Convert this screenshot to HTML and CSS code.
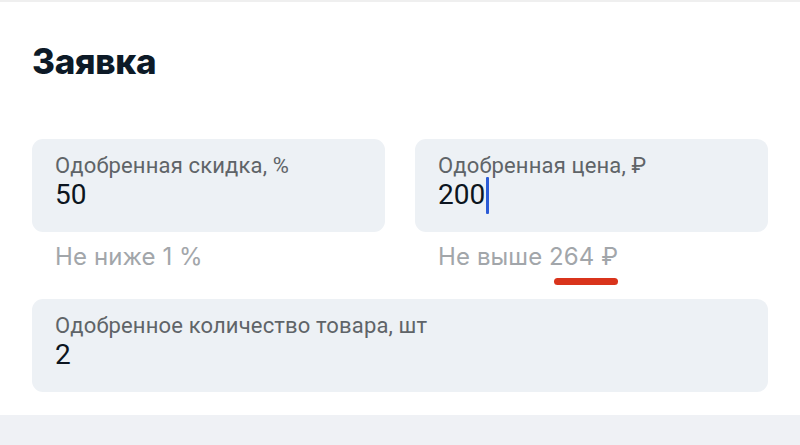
FILE: index.html
```html
<!DOCTYPE html>
<html lang="ru">
<head>
<meta charset="utf-8">
<title>Заявка</title>
<link rel="stylesheet" href="styles.css">
</head>
<body>
<div class="page">
  <div class="topline"></div>
  <div class="content">
    <h1 class="title">Заявка</h1>
    <div class="grid">
      <div class="col">
        <div class="field">
          <div class="label">Одобренная скидка, %</div>
          <div class="value">50</div>
        </div>
        <div class="hint">Не ниже 1 %</div>
      </div>
      <div class="col">
        <div class="field">
          <div class="label">Одобренная цена, ₽</div>
          <div class="value">200<span class="cursor"></span></div>
        </div>
        <div class="hint">Не выше <span class="mark">264 ₽</span></div>
      </div>
    </div>
    <div class="field field-wide">
      <div class="label">Одобренное количество товара, шт</div>
      <div class="value">2</div>
    </div>
  </div>
  <div class="band"></div>
</div>
</body>
</html>
```

FILE: styles.css
```css
html, body {
  margin: 0;
  padding: 0;
  background: #ffffff;
}
.page {
  width: 800px;
  height: 445px;
  overflow: hidden;
  display: flex;
  flex-direction: column;
}
.topline {
  height: 2px;
  background: #efefef;
}
.content {
  padding: 38px 32px 0;
}
.title {
  margin: 0;
  font-family: Inter, "Open Sans", sans-serif;
  font-weight: 800;
  font-size: 35px;
  line-height: 42px;
  color: #0d1a27;
  letter-spacing: -0.3px;
}
.grid {
  margin-top: 57px;
  display: grid;
  grid-template-columns: 1fr 1fr;
  column-gap: 30px;
}
.field {
  background: #edf1f5;
  border-radius: 11px;
  padding: 14px 23px 21px;
}
.label {
  font-family: Roboto, "Noto Sans", sans-serif;
  font-size: 22px;
  line-height: 26px;
  color: #5f6468;
  letter-spacing: 0.15px;
}
.value {
  font-family: Roboto, "Noto Sans", sans-serif;
  font-size: 28px;
  line-height: 32px;
  color: #0c1520;
}
.cursor {
  display: inline-block;
  width: 3px;
  height: 37px;
  background: #2b5bd6;
  border-radius: 1px;
  vertical-align: top;
  margin: -2px 0 -3px 1px;
}
.hint {
  margin-top: 11px;
  padding-left: 23px;
  font-family: Inter, "Open Sans", sans-serif;
  font-size: 24px;
  line-height: 28px;
  letter-spacing: 0.1px;
  color: #a2a6aa;
}
.mark {
  position: relative;
}
.mark::after {
  content: "";
  position: absolute;
  left: 5px;
  right: 0;
  top: calc(100% + 7px);
  height: 7px;
  border-radius: 4px;
  background: #d9341c;
}
.field-wide {
  margin-top: 28px;
}
.band {
  margin-top: 23px;
  flex: 1;
  background: #eff1f5;
}
```
